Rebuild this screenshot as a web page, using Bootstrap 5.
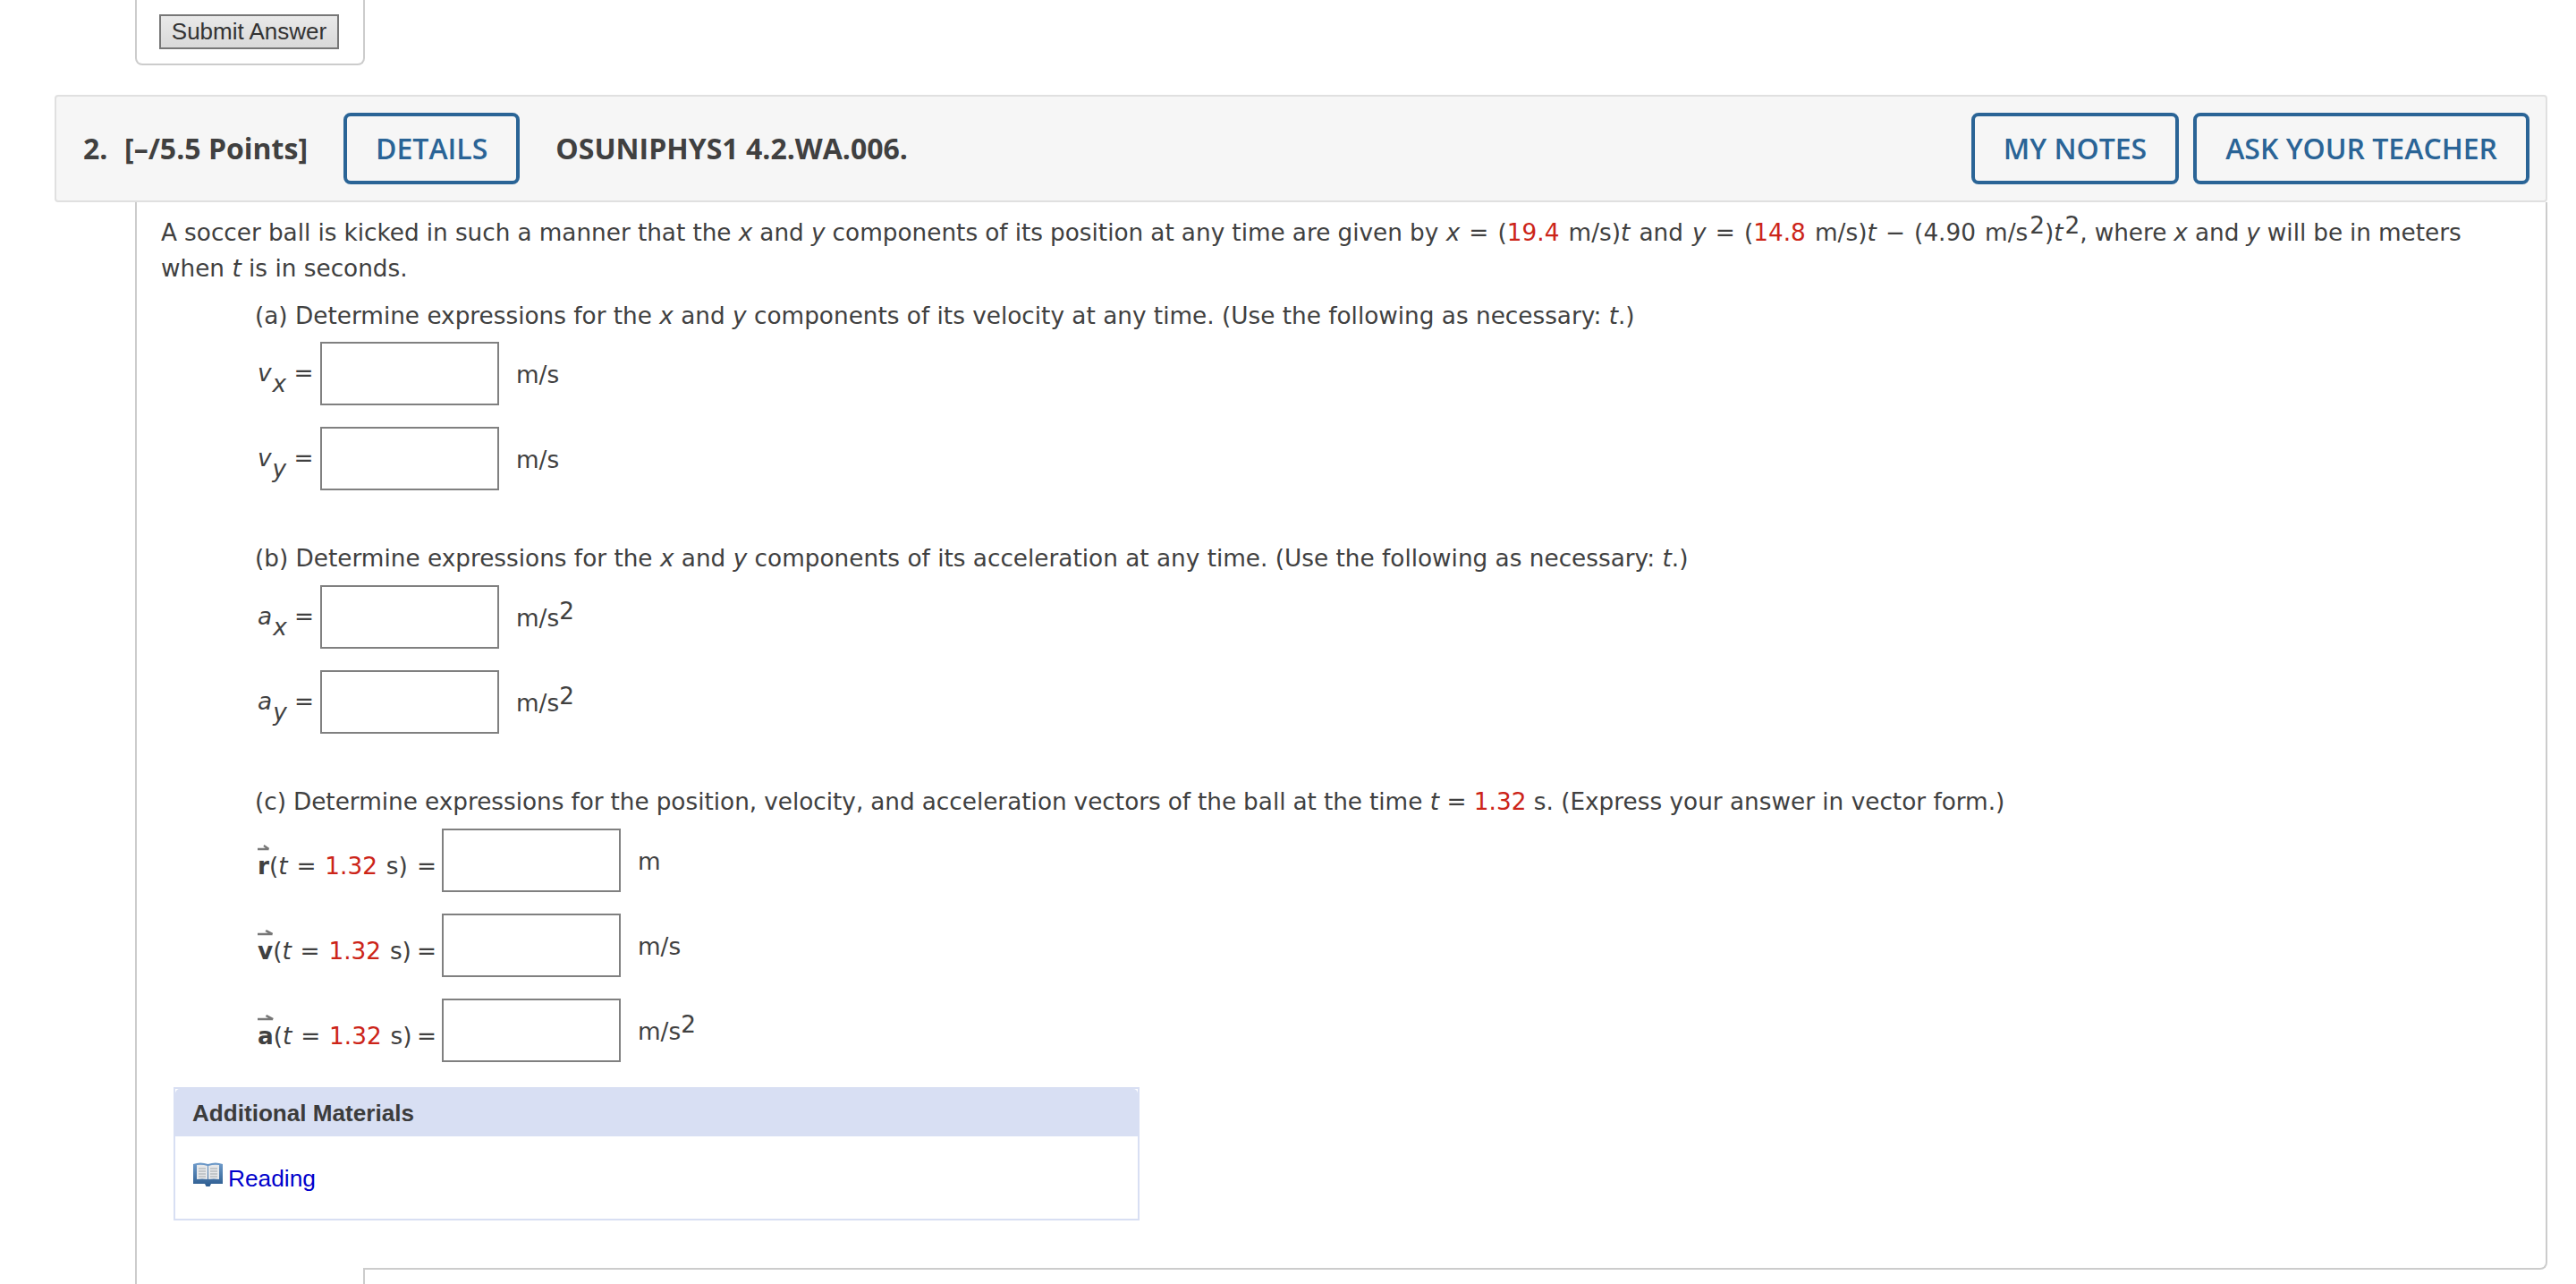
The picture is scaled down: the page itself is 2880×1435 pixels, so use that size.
<!DOCTYPE html>
<html lang="en">
<head>
<meta charset="utf-8">
<title>Question 2</title>
<link rel="stylesheet" href="https://cdn.jsdelivr.net/npm/bootstrap@5.3.0/dist/css/bootstrap.min.css">
<style>
html,body{height:1435px;overflow:hidden;background:#fff}
body{font-family:"DejaVu Sans",sans-serif;font-size:26.3px;line-height:40px;color:#404040}
.topTab{margin-left:151px;width:257px;height:73px;border:2px solid #ccc;border-top:0;border-radius:0 0 8px 8px;padding:16px 0 0 25px}
.subBtn{display:block;width:201px;height:39px;padding:0;border:2px solid #777;border-radius:0;background:linear-gradient(#e9e9e9,#d9d9d9);color:#333;font:26px/35px "Liberation Sans",sans-serif}
.qHead{margin:33px 32px 0 61px;height:120px;background:#f6f6f6;border:2px solid #e0e0e0;border-radius:4px;padding:0 18px 0 30px;font:700 32px/1 "Open Sans",sans-serif;color:#404040}
.qNum{margin-right:40px}
.ptsTxt{margin-left:2px}
.qCode{margin-left:40px}
.outBtn{height:80px;border:4px solid #2a6496;border-radius:8px;background:transparent;color:#2a6496;font:600 32px/1 "Open Sans",sans-serif;padding:0 32px}
.outBtn:hover{color:#2a6496;border-color:#2a6496}
.qBody{margin:0 32px 0 151px;height:1193px;border:2px solid #ccc;border-top:0;border-radius:0 0 8px 0;padding:14px 50px 0 27px}
.lowTab{margin:-2px 0 0 151px;width:257px;height:20px;background:#fff;border-left:2px solid #ccc;border-right:2px solid #ccc;position:relative}
.pre{word-spacing:-.25px}
.eqn{word-spacing:1.800px}
.eqnTail{word-spacing:-.4px}
.tightPre{word-spacing:-.4px}
.partArea{margin-left:105px}
.partLabel{margin-top:13px;margin-bottom:9px}
.partLabel.spaced{margin-top:57px;margin-bottom:10px}
.mathRow{margin-bottom:25px;height:70px}
.mathRow:last-child{margin-bottom:0}
.lab{width:73px;padding-left:3px;white-space:nowrap}
.labWide{width:209px;padding:13px 6px 0 3px;white-space:nowrap;word-spacing:1.500px}
.ans{width:200px;height:71px;border:2px solid #808080;background:#fff;border-radius:0;padding:0 6px}
.unit{margin-left:19px;padding-top:4px}
.unit sup{margin-left:0}
.red{color:#cc2418}
sup,sub{font-size:100%;line-height:0}
sup{top:-.3em;margin-left:2px}
sub{bottom:-.45em;margin-left:1px}
.vecWrap{position:relative;display:inline-block;font-weight:700}
.vecArrow{position:absolute;left:0;top:-5px;width:100%;height:9px}
.addBox{margin:29px 0 0 -91px;width:1080px;height:149px;border:2px solid #d8dff3;border-radius:0;font-family:"Liberation Sans",sans-serif}
.addHead{height:53px;background:#d8dff3;border:0;border-radius:0;padding:0 19px;font:700 26.100px/54px "Liberation Sans",sans-serif;color:#3c3c3c}
.addBody{padding:25px 20px 0;font-size:26.300px;line-height:44px}
.addBody a{color:#0000cc;text-decoration:none}
.bookIc{width:33px;height:29px;margin-right:6px;vertical-align:-1px}
</style>
</head>
<body>
<div class="topTab"><button class="btn subBtn" type="button">Submit Answer</button></div>

<div class="qHead d-flex align-items-center">
  <span class="qNum">2.&nbsp; <span class="ptsTxt">[–/5.5 Points]</span></span>
  <button class="btn outBtn" type="button">DETAILS</button>
  <span class="qCode">OSUNIPHYS1 4.2.WA.006.</span>
  <div class="ms-auto d-flex gap-3">
    <button class="btn outBtn" type="button">MY NOTES</button>
    <button class="btn outBtn" type="button">ASK YOUR TEACHER</button>
  </div>
</div>

<div class="qBody">
  <div><span class="pre">A soccer ball is kicked in such a manner that the <i>x</i> and <i>y</i> components of its position at any time are given by</span> <span class="eqn"><i>x</i> = (<span class="red">19.4</span> m/s)<i>t</i> and <i>y</i> = (<span class="red">14.8</span> m/s)<i>t</i> − (4.90 m/s<sup>2</sup>)<i>t</i><sup>2</sup></span><span class="eqnTail">, where <i>x</i> and <i>y</i> will be in meters</span> when <i>t</i> is in seconds.</div>

  <div class="partArea">
    <div class="partLabel">(a) Determine expressions for the <i>x</i> and <i>y</i> components of its velocity at any time. (Use the following as necessary: <i>t</i>.)</div>
    <div>
      <div class="mathRow d-flex align-items-center"><span class="lab"><i>v<sub>x</sub></i> =</span><input class="ans" type="text" aria-label="vx"><span class="unit">m/s</span></div>
      <div class="mathRow d-flex align-items-center"><span class="lab"><i>v<sub>y</sub></i> =</span><input class="ans" type="text" aria-label="vy"><span class="unit">m/s</span></div>
    </div>

    <div class="partLabel spaced">(b) Determine expressions for the <i>x</i> and <i>y</i> components of its acceleration at any time. (Use the following as necessary: <i>t</i>.)</div>
    <div>
      <div class="mathRow d-flex align-items-center"><span class="lab"><i>a<sub>x</sub></i> =</span><input class="ans" type="text" aria-label="ax"><span class="unit">m/s<sup>2</sup></span></div>
      <div class="mathRow d-flex align-items-center"><span class="lab"><i>a<sub>y</sub></i> =</span><input class="ans" type="text" aria-label="ay"><span class="unit">m/s<sup>2</sup></span></div>
    </div>

    <div class="partLabel spaced"><span class="tightPre">(c) Determine expressions for the position, velocity, and acceleration vectors of the ball at the time</span> <i>t</i> = <span class="red">1.32</span> s. (Express your answer in vector form.)</div>
    <div>
      <div class="mathRow d-flex align-items-center"><span class="labWide d-flex justify-content-between"><span><span class="vecWrap">r<svg class="vecArrow" viewBox="0 0 15 9" preserveAspectRatio="none"><path d="M0 6H14.500M8 2 14.500 6" fill="none" stroke="#777" stroke-width="2.500"/></svg></span>(<i>t</i> = <span class="red">1.32</span> s)</span><span>=</span></span><input class="ans" type="text" aria-label="r"><span class="unit">m</span></div>
      <div class="mathRow d-flex align-items-center"><span class="labWide d-flex justify-content-between"><span><span class="vecWrap">v<svg class="vecArrow" viewBox="0 0 15 9" preserveAspectRatio="none"><path d="M0 6H14.500M8 2 14.500 6" fill="none" stroke="#777" stroke-width="2.500"/></svg></span>(<i>t</i> = <span class="red">1.32</span> s)</span><span>=</span></span><input class="ans" type="text" aria-label="v"><span class="unit">m/s</span></div>
      <div class="mathRow d-flex align-items-center"><span class="labWide d-flex justify-content-between"><span><span class="vecWrap">a<svg class="vecArrow" viewBox="0 0 15 9" preserveAspectRatio="none"><path d="M0 6H14.500M8 2 14.500 6" fill="none" stroke="#777" stroke-width="2.500"/></svg></span>(<i>t</i> = <span class="red">1.32</span> s)</span><span>=</span></span><input class="ans" type="text" aria-label="a"><span class="unit">m/s<sup>2</sup></span></div>
    </div>

    <div class="card addBox">
      <div class="card-header addHead">Additional Materials</div>
      <div class="addBody"><a href="#"><svg class="bookIc" viewBox="0 0 33 29"><defs><linearGradient id="bk" x1="0" y1="0" x2="0" y2="1"><stop offset="0" stop-color="#6f9ccb"/><stop offset="1" stop-color="#2b5b8f"/></linearGradient></defs><path d="M0 3Q8 0 16.500 3 25 0 33 3V25H20L18.500 28H14.500L13 25H0Z" fill="url(#bk)"/><path d="M4 4Q10 3 16 5V20Q10 19 4 20ZM17 5Q23 3 29 4V20Q23 19 17 20Z" fill="#e6e8ea"/><path d="M6 8h8M6 11h8M6 14h8M6 17h8M19 8h8M19 11h8M19 14h8M19 17h8" stroke="#b8bcc0" stroke-width="1.700"/></svg>Reading</a></div>
    </div>
  </div>
</div>
<div class="lowTab"></div>

<script src="https://cdn.jsdelivr.net/npm/bootstrap@5.3.0/dist/js/bootstrap.bundle.min.js"></script>
</body>
</html>
